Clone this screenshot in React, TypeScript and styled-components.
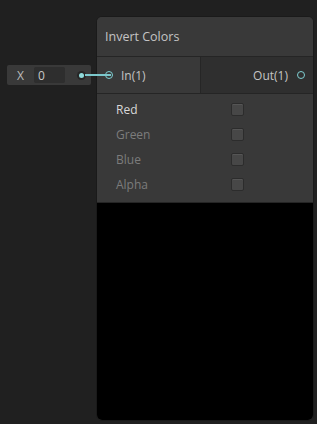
import React from 'react';
import styled, { createGlobalStyle } from 'styled-components';

const GlobalStyle = createGlobalStyle`
  html, body {
    margin: 0;
    padding: 0;
    background: #202020;
    font-family: "Open Sans", "Liberation Sans", sans-serif;
  }
`;

const channels = [
  { label: 'Red', active: true },
  { label: 'Green', active: false },
  { label: 'Blue', active: false },
  { label: 'Alpha', active: false },
];

const App = () => {
  return (
    <>
      <GlobalStyle />
      <Canvas>
        <InputField>
          <AxisLabel>X</AxisLabel>
          <ValueBox>0</ValueBox>
          <Dot />
          <Wire />
        </InputField>
        <Node>
          <Header>Invert Colors</Header>
          <PortRow>
            <InPort>
              <Port />
              <PortLabel>In(1)</PortLabel>
            </InPort>
            <OutPort>
              <PortLabel>Out(1)</PortLabel>
              <Port />
            </OutPort>
          </PortRow>
          <Body>
            {channels.map((c) => (
              <ChannelRow key={c.label}>
                <ChannelLabel $active={c.active}>{c.label}</ChannelLabel>
                <Checkbox />
              </ChannelRow>
            ))}
          </Body>
          <Preview />
        </Node>
      </Canvas>
    </>
  );
};

export default App;

const Canvas = styled.div`
  display: flex;
  align-items: flex-start;
  width: 317px;
  height: 424px;
  padding-top: 16px;
  box-sizing: border-box;
  overflow: hidden;
`;

const InputField = styled.div`
  position: relative;
  display: flex;
  align-items: center;
  flex-shrink: 0;
  margin-top: 49px;
  margin-left: 7px;
  width: 84px;
  height: 20px;
  background: #393939;
  border-radius: 2px;
`;

const AxisLabel = styled.span`
  flex-shrink: 0;
  width: 27px;
  text-align: center;
  color: #bdbdbd;
  font-size: 12px;
`;

const ValueBox = styled.div`
  flex-shrink: 0;
  display: flex;
  align-items: center;
  width: 31px;
  height: 16px;
  padding-left: 4px;
  box-sizing: border-box;
  background: #2e2e2e;
  border-radius: 2px;
  color: #c8c8c8;
  font-size: 12px;
`;

const Dot = styled.div`
  flex-shrink: 0;
  width: 5px;
  height: 5px;
  margin-left: 14px;
  border-radius: 50%;
  background: #8fdada;
  box-shadow: 0 0 0 2px #262626;
`;

const Wire = styled.div`
  position: absolute;
  left: 78px;
  top: 9px;
  width: 26px;
  height: 2px;
  background: #7cc8cc;
`;

const Node = styled.div`
  display: flex;
  flex-direction: column;
  flex-shrink: 0;
  margin-left: 5px;
  width: 218px;
  height: 405px;
  border: 1px solid #1a1a1a;
  border-radius: 6px;
  overflow: hidden;
  background: #393939;
  box-sizing: border-box;
`;

const Header = styled.div`
  height: 40px;
  display: flex;
  align-items: center;
  padding-left: 8px;
  background: #393939;
  color: #c4c4c4;
  font-size: 12.5px;
  border-bottom: 1px solid #252525;
  box-sizing: border-box;
`;

const PortRow = styled.div`
  display: flex;
  height: 36px;
  border-bottom: 1px solid #252525;
`;

const InPort = styled.div`
  display: flex;
  align-items: center;
  gap: 8px;
  width: 104px;
  padding-left: 8px;
  box-sizing: border-box;
  background: #393939;
  border-right: 1px solid #262626;
`;

const OutPort = styled.div`
  flex: 1;
  display: flex;
  align-items: center;
  justify-content: flex-end;
  gap: 9px;
  padding-right: 8px;
  background: #2f2f2f;
`;

const Port = styled.div`
  width: 6px;
  height: 6px;
  border-radius: 50%;
  border: 1.5px solid #7fcfd2;
`;

const PortLabel = styled.span`
  color: #c4c4c4;
  font-size: 12px;
`;

const Body = styled.div`
  display: flex;
  flex-direction: column;
  padding: 3px 0 5px;
  background: #393939;
  border-bottom: 1px solid #252525;
`;

const ChannelRow = styled.div`
  display: flex;
  align-items: center;
  height: 25px;
  padding-left: 19px;
`;

const ChannelLabel = styled.span<{ $active: boolean }>`
  width: 115px;
  font-size: 12px;
  color: ${(p) => (p.$active ? '#d8d8d8' : '#7c7c7c')};
`;

const Checkbox = styled.div`
  width: 11px;
  height: 11px;
  background: #474747;
  border: 1px solid #2c2c2c;
  border-radius: 2px;
  box-shadow: inset 0 1px 0 #555;
`;

const Preview = styled.div`
  flex: 1;
  background: #000;
`;
